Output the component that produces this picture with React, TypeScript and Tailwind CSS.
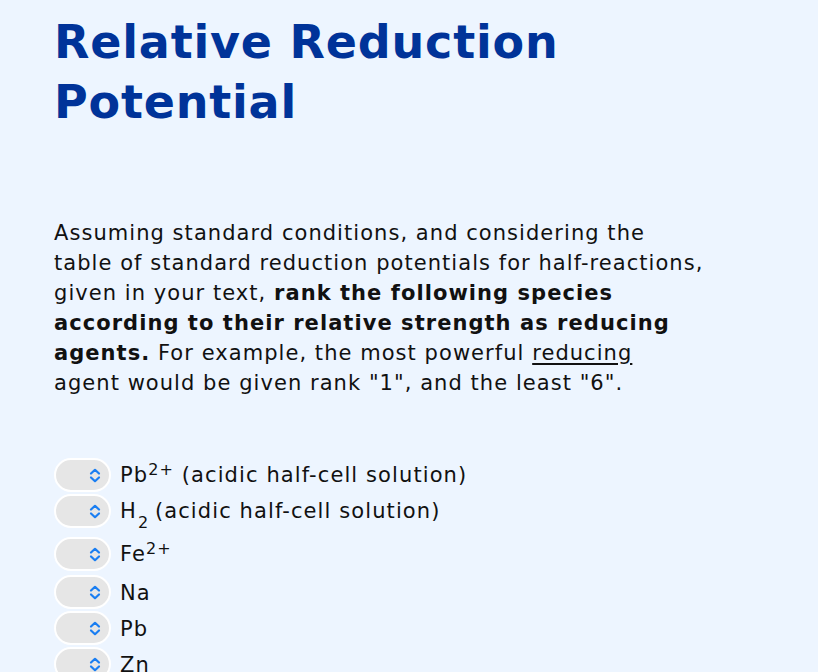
import React from 'react';

type Species = {
  id: string;
  label: React.ReactNode;
  gap: string;
};

const Sup = ({ children }: { children: React.ReactNode }) => (
  <span className="relative -top-[7px] align-baseline text-[16px]">{children}</span>
);

const Sub = ({ children }: { children: React.ReactNode }) => (
  <span className="relative top-[10px] ml-[1px] mr-[-2px] align-baseline text-[16px]">{children}</span>
);

const species: Species[] = [
  { id: 'pb2', label: <>Pb<Sup>2+</Sup> (acidic half-cell solution)</>, gap: 'mb-[2px]' },
  { id: 'h2', label: <>H<Sub>2</Sub> (acidic half-cell solution)</>, gap: 'mb-[9px]' },
  { id: 'fe2', label: <>Fe<Sup>2+</Sup></>, gap: 'mb-[4px]' },
  { id: 'na', label: 'Na', gap: 'mb-[2px]' },
  { id: 'pb', label: 'Pb', gap: 'mb-[2px]' },
  { id: 'zn', label: 'Zn', gap: 'mb-[2px]' },
];

const Chevrons = () => (
  <svg width="12" height="15" viewBox="0 0 12 15" fill="none" stroke="#1a7ef2" strokeWidth="2.2" strokeLinecap="round" strokeLinejoin="round">
    <path d="M2 5.5 L6 1.8 L10 5.5" />
    <path d="M2 9.5 L6 13.2 L10 9.5" />
  </svg>
);

const RankSelect = () => (
  <div className="flex h-[34px] w-[57px] shrink-0 items-center justify-end rounded-full border-2 border-white bg-[#e6e6e6] pr-[8px]">
    <Chevrons />
  </div>
);

export default function App() {
  return (
    <div className="min-h-[672px] bg-[#edf5ff] pl-[54px] pt-[12px] text-[#111]" style={{ fontFamily: '"DejaVu Sans", Verdana, sans-serif' }}>
      <h1 className="text-[46px] font-bold leading-[60px] tracking-[0.8px] text-[#003399]">
        Relative Reduction
        <br />
        Potential
      </h1>

      <p className="mt-[86px] whitespace-nowrap text-[21px] leading-[30px] tracking-[1.05px]">
        Assuming standard conditions, and considering the
        <br />
        table of standard reduction potentials for half-reactions,
        <br />
        given in your text, <b>rank the following species</b>
        <br />
        <b>according to their relative strength as reducing</b>
        <br />
        <b>agents.</b> For example, the most powerful <u className="underline-offset-[3px]">reducing</u>
        <br />
        agent would be given rank "1", and the least "6".
      </p>

      <div className="mt-[60px] flex flex-col">
        {species.map((s) => (
          <div key={s.id} className={`flex items-center ${s.gap}`}>
            <RankSelect />
            <span className="ml-[9px] mt-[2px] whitespace-nowrap text-[21px] leading-[24px] tracking-[1.1px]">{s.label}</span>
          </div>
        ))}
      </div>
    </div>
  );
}
